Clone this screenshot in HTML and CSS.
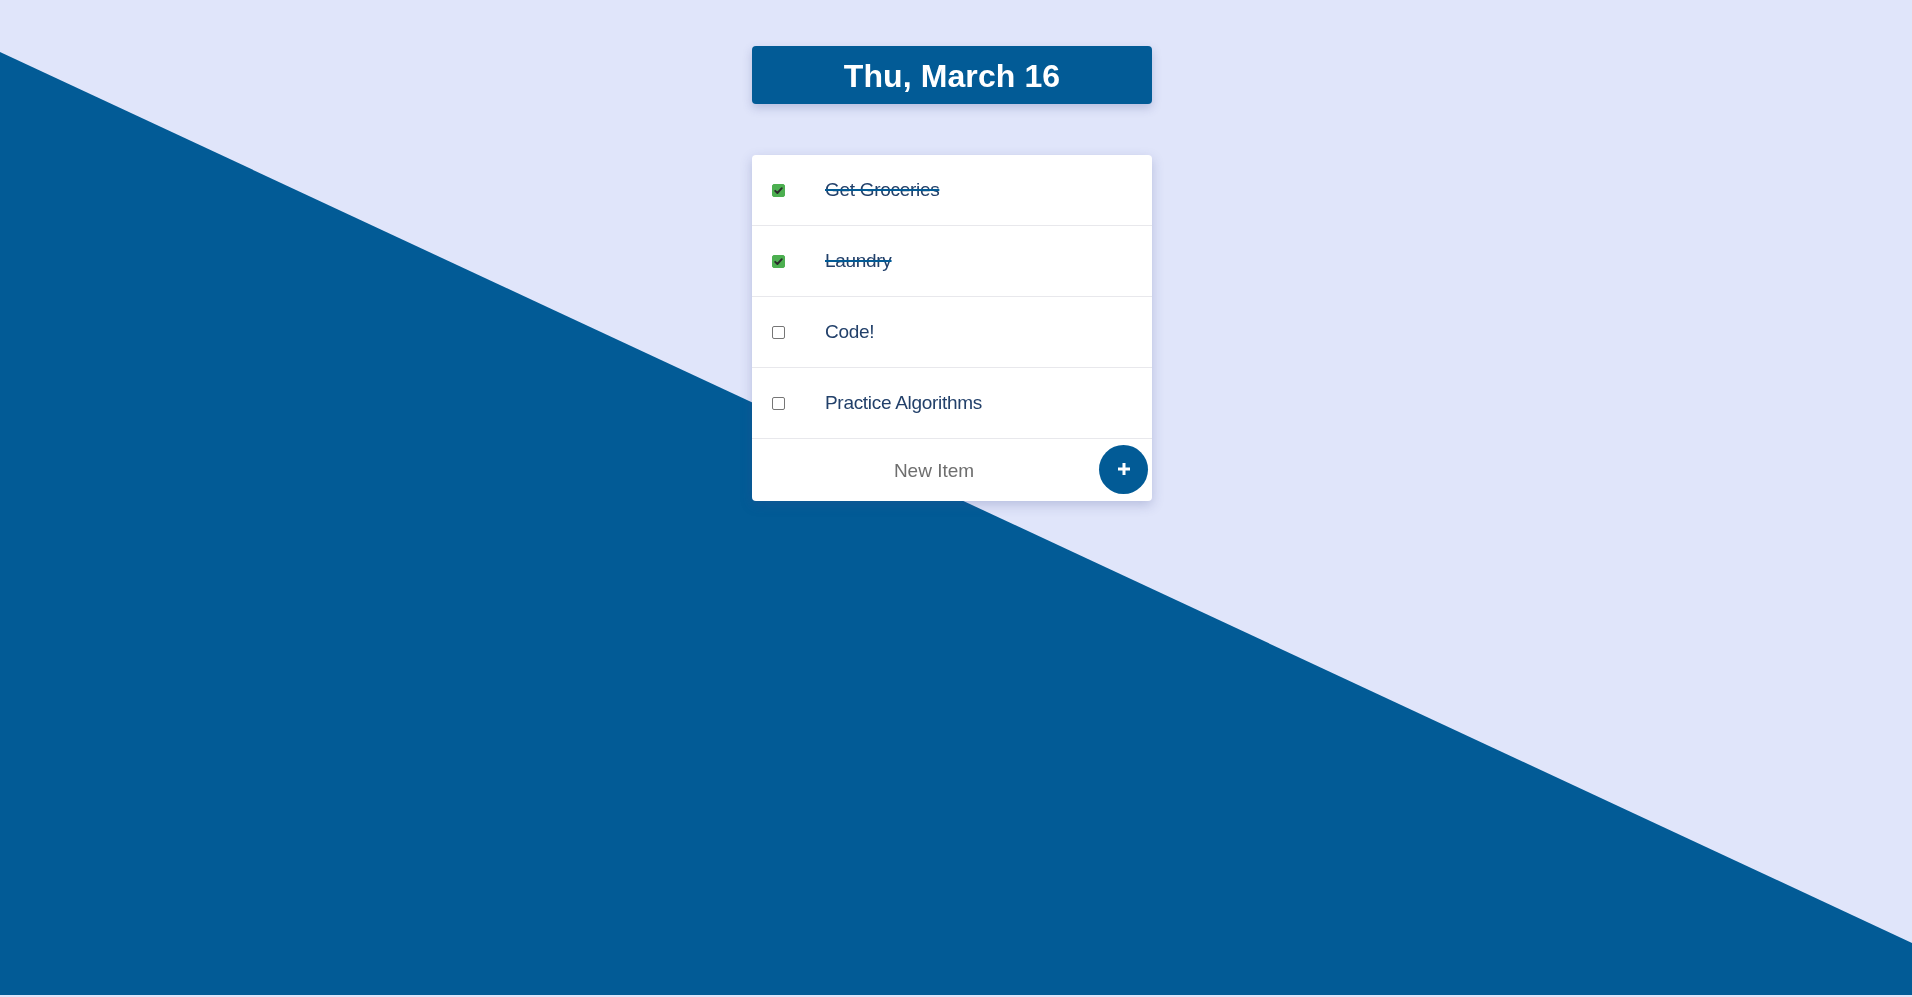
FILE: index.html
```html
<!DOCTYPE html>
<html lang="en">
<head>
<meta charset="utf-8">
<title>Todo</title>
<link rel="stylesheet" href="styles.css">
</head>
<body>
<div class="backdrop"></div>
<main class="app">
  <header class="date-card"><h1 class="date-title">Thu, March 16</h1></header>
  <section class="list-card">
    <ul class="items">
      <li class="item done">
        <span class="box checked"><svg viewBox="0 0 13 13" width="13" height="13"><path d="M3.2 6.8 L5.4 9 L9.8 4.2" fill="none" stroke="#2b2b2b" stroke-width="1.9" stroke-linecap="round" stroke-linejoin="round"/></svg></span>
        <span class="label">Get Groceries</span>
      </li>
      <li class="item done">
        <span class="box checked"><svg viewBox="0 0 13 13" width="13" height="13"><path d="M3.2 6.8 L5.4 9 L9.8 4.2" fill="none" stroke="#2b2b2b" stroke-width="1.9" stroke-linecap="round" stroke-linejoin="round"/></svg></span>
        <span class="label">Laundry</span>
      </li>
      <li class="item">
        <span class="box"></span>
        <span class="label">Code!</span>
      </li>
      <li class="item">
        <span class="box"></span>
        <span class="label">Practice Algorithms</span>
      </li>
    </ul>
    <form class="new-row">
      <span class="new-input">New Item</span>
      <button class="add-btn" type="button"><svg viewBox="0 0 16 16" width="16" height="16"><path d="M8 2 V14 M2 8 H14" stroke="#fff" stroke-width="3"/></svg></button>
    </form>
  </section>
</main>
</body>
</html>
```

FILE: styles.css
```css
html, body {
  margin: 0;
  padding: 0;
  height: 100%;
}
body {
  background: #e0e5fa;
  font-family: "Liberation Sans", Arial, sans-serif;
  overflow: hidden;
}
.backdrop {
  position: fixed;
  inset: 0;
  background: #025b96;
  clip-path: polygon(0 52px, 100% 943px, 100% 995px, 0 995px);
  z-index: 0;
}
.app {
  position: relative;
  z-index: 1;
  width: 400px;
  margin: 0 auto;
  padding-top: 46px;
  transform: translateX(-4px);
  display: flex;
  flex-direction: column;
  gap: 51px;
}
.date-card {
  height: 58px;
  background: #025b96;
  border-radius: 4px;
  box-shadow: 0 4px 10px rgba(60, 70, 140, 0.25);
  display: flex;
  align-items: center;
  justify-content: center;
}
.date-title {
  margin: 0;
  color: #fff;
  font-size: 32px;
  font-weight: 700;
  letter-spacing: 0.1px;
  line-height: 1;
  padding-top: 2px;
}
.list-card {
  background: #fff;
  border-radius: 4px;
  box-shadow: 0 4px 12px rgba(60, 70, 140, 0.25);
}
.items {
  list-style: none;
  margin: 0;
  padding: 0;
}
.item {
  height: 70px;
  border-bottom: 1px solid #e8e8ec;
  display: flex;
  align-items: center;
  padding-left: 20px;
}
.box {
  width: 13px;
  height: 13px;
  box-sizing: border-box;
  border: 1px solid #767676;
  border-radius: 2px;
  background: #fff;
  flex: none;
  display: flex;
}
.box.checked {
  background: #4caf50;
  border-color: #4caf50;
}
.box svg {
  margin: -1px;
}
.label {
  margin-left: 40px;
  font-size: 19px;
  letter-spacing: -0.3px;
  color: #22406a;
}
.done .label {
  text-decoration: line-through;
  text-decoration-color: #025b96;
  text-decoration-thickness: 2px;
}
.new-row {
  height: 62px;
  display: flex;
  align-items: center;
  margin: 0;
  padding-right: 4px;
}
.new-input {
  flex: 1;
  text-align: center;
  font-size: 19px;
  color: #6e6e6e;
  padding-left: 17px;
  padding-top: 2px;
}
.add-btn {
  width: 49px;
  height: 49px;
  border-radius: 50%;
  border: none;
  background: #025b96;
  padding: 0;
  display: flex;
  align-items: center;
  justify-content: center;
  margin-top: -2px;
}
```
